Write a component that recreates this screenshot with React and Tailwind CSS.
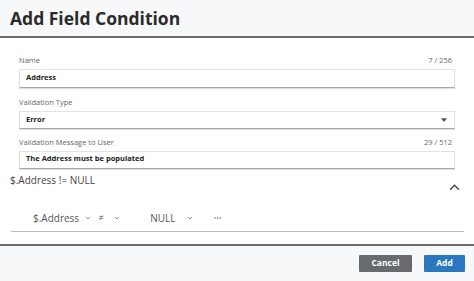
import React from "react";

const Chevron = ({ className = "" }) => (
  <svg viewBox="0 0 10 6" className={className} fill="none" stroke="currentColor" strokeWidth="1.4">
    <path d="M1.5 1.2 L5 4.6 L8.5 1.2" />
  </svg>
);

const inputCls =
  "border border-[#e2e2e2] border-b-[#a8a8a8] shadow-[0_1px_1px_rgba(0,0,0,0.12)] flex items-center px-[6px] text-[7.5px] font-bold text-[#222]";

export default function App() {
  return (
    <div
      className="w-[474px] h-[281px] bg-white flex flex-col overflow-hidden text-[#333]"
      style={{ fontFamily: '"Open Sans", "Noto Sans", sans-serif' }}
    >
      <div className="h-[38px] shrink-0 bg-[#f7f8f9] border-b-2 border-[#6b6b6b] flex items-center px-[10px]">
        <h1 className="text-[17.5px] font-bold text-[#2b2b2b] leading-none mt-[1px]">Add Field Condition</h1>
      </div>
      <div className="flex-1 min-h-0 flex flex-col">
        <div className="flex flex-col px-[19px] pt-[19px]">
          <div className="flex justify-between text-[7.5px] text-[#666] leading-none">
            <span>Name</span>
            <span className="mr-[3px]">7 / 256</span>
          </div>
          <div className={`mt-[4px] h-[19px] ${inputCls}`}>Address</div>
          <div className="mt-[11px] text-[7.5px] text-[#666] leading-none">Validation Type</div>
          <div className={`mt-[5px] h-[18px] justify-between ${inputCls}`}>
            <span>Error</span>
            <svg viewBox="0 0 8 5" className="w-[6px] h-[4px] mr-[1px]" fill="#555">
              <path d="M0 0 L8 0 L4 5 Z" />
            </svg>
          </div>
          <div className="mt-[10px] flex justify-between text-[7.5px] text-[#666] leading-none">
            <span>Validation Message to User</span>
            <span className="mr-[3px]">29 / 512</span>
          </div>
          <div className="mt-[4px] h-[18px] border border-[#e2e2e2] border-b-[#a8a8a8] shadow-[0_1px_1px_rgba(0,0,0,0.12)] px-[6px] pt-[1px] text-[7.5px] font-bold text-[#222] leading-[10px]">
            The Address must be populated
          </div>
        </div>
        <div className="px-[10px]">
          <div className="flex justify-between items-start mt-[6px]">
            <span className="text-[10px] text-[#444] leading-none">$.Address != NULL</span>
            <svg viewBox="0 0 12 8" className="w-[11px] h-[7px] mr-[4px] mt-[9px]" fill="none" stroke="#444" strokeWidth="1.6">
              <path d="M1 6.5 L6 1.5 L11 6.5" />
            </svg>
          </div>
          <div className="mt-[20px] flex items-center pl-[23px] text-[10px] text-[#555] leading-none h-[14px]">
            <span>$.Address</span>
            <Chevron className="w-[6px] h-[4px] ml-[6px] text-[#777]" />
            <span className="ml-[7px] text-[9px]">≠</span>
            <Chevron className="w-[6px] h-[4px] ml-[11px] text-[#777]" />
            <span className="ml-[30px]">NULL</span>
            <Chevron className="w-[6px] h-[4px] ml-[11px] text-[#777]" />
            <svg viewBox="0 0 8 2" className="w-[7px] h-[2px] ml-[21px]" fill="#666">
              <circle cx="1" cy="1" r="0.9" />
              <circle cx="4" cy="1" r="0.9" />
              <circle cx="7" cy="1" r="0.9" />
            </svg>
          </div>
          <div className="mt-[6px] h-[1px] bg-[#bbb] ml-[1px]" />
        </div>
      </div>
      <div className="h-[37px] shrink-0 bg-[#f7f8f9] border-t-2 border-[#6b6b6b] flex items-center justify-end pr-[9px] gap-[12px]">
        <button className="w-[53px] h-[17px] bg-[#676a6e] text-white text-[8.5px] font-bold rounded-[1px] leading-none">Cancel</button>
        <button className="w-[41px] h-[17px] bg-[#2a77bd] text-white text-[8.5px] font-bold rounded-[1px] leading-none">Add</button>
      </div>
    </div>
  );
}
